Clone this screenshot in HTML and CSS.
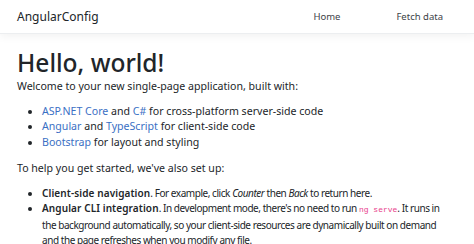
FILE: index.html
```html
<!DOCTYPE html>
<html lang="en">

<head>
	<title>AngularConfig</title>
	<link rel="stylesheet" href="styles.css">
</head>

<body>
	<!-- Top navigation -->
	<header class="navbar">
		<a class="brand" href="#">AngularConfig</a>
		<nav class="nav-links">
			<a href="#">Home</a>
			<a href="#">Fetch data</a>
		</nav>
	</header>

	<!-- Page content -->
	<main class="content">
		<h1>Hello, world!</h1>
		<p>Welcome to your new single-page application, built with:</p>
		<ul>
			<li><a href="#">ASP.NET Core</a> and <a href="#">C#</a> for cross-platform server-side code</li>
			<li><a href="#">Angular</a> and <a href="#">TypeScript</a> for client-side code</li>
			<li><a href="#">Bootstrap</a> for layout and styling</li>
		</ul>
		<p>To help you get started, we've also set up:</p>
		<ul class="features">
			<li><strong>Client-side navigation</strong>. For example, click <em>Counter</em> then <em>Back</em> to return here.</li>
			<li><strong>Angular CLI integration</strong>. In development mode, there's no need to run <code>ng serve</code>. It runs in the background automatically, so your client-side resources are dynamically built on demand and the page refreshes when you modify any file.</li>
		</ul>
	</main>
</body>

</html>
```

FILE: styles.css
```css
/* Base font and reset */
body {
	margin: 0;
	font-family: "Noto Sans", "Open Sans", sans-serif;
	font-size: 10.6px;
	line-height: 15.5px;
	color: #212529;
	background: #fff;
}

a {
	color: #3a6fc4;
	text-decoration: none;
}

/* Navigation bar */
.navbar {
	display: flex;
	align-items: center;
	justify-content: space-between;
	height: 33px;
	padding: 0 17px;
	border-bottom: 1px solid #eceef0;
	box-shadow: 0 3px 8px rgba(0, 0, 0, 0.05);
}

.brand {
	color: #212529;
	font-size: 12px;
}

.nav-links {
	display: flex;
	gap: 56px;
	padding-right: 14px;
}

.nav-links a {
	color: #3d4247;
	font-size: 9.5px;
}

/* Main content */
.content {
	padding: 14px 30px 0 17px;
}

h1 {
	margin: 0 0 2px;
	font-size: 24.5px;
	font-weight: 500;
	line-height: 1.2;
}

p {
	margin: 0 0 9px;
}

ul {
	margin: 0 0 11px;
	padding-left: 25px;
}

/* Second list is set a little tighter */
.features {
	font-size: 10px;
	letter-spacing: -0.45px;
}

strong {
	font-weight: 600;
	letter-spacing: 0.1px;
}

code {
	font-family: "Liberation Mono", monospace;
	font-size: 8px;
	letter-spacing: 0;
	color: #e83e8c;
}
```
